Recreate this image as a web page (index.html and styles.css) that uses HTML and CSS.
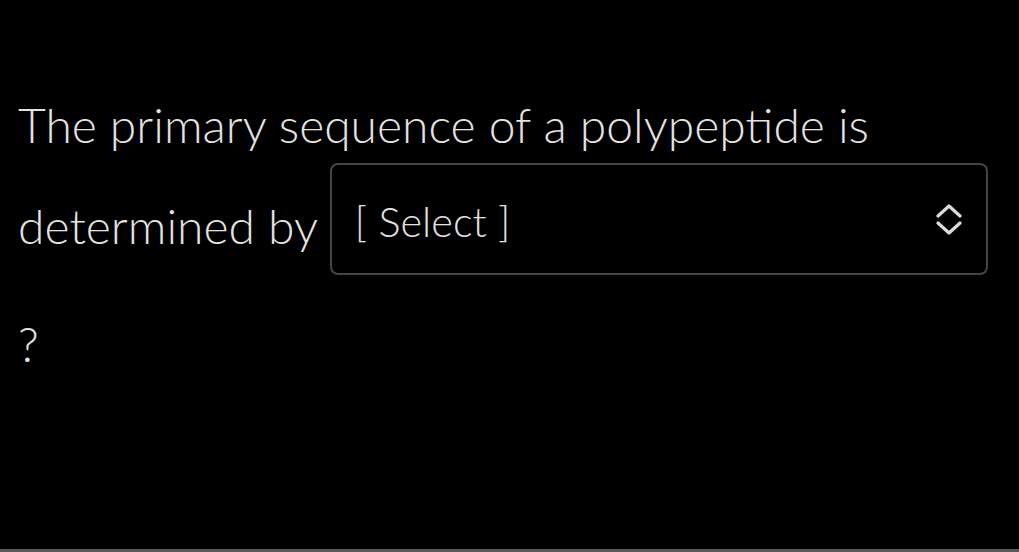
FILE: index.html
```html
<!DOCTYPE html>
<html lang="en">
<head>
<meta charset="utf-8">
<title>Quiz question</title>
<link rel="stylesheet" href="styles.css">
</head>
<body>
<main class="page">
  <p class="question">The primary sequence of a polypeptide is determined by <span class="select"><span class="select-label">[ Select ]</span><svg class="chevrons" width="26" height="31" viewBox="0 0 26 31" aria-hidden="true"><path d="M2 12 L13 2 L24 12 M2 19 L13 29 L24 19" fill="none" stroke="#dcdcdc" stroke-width="3.2" stroke-linecap="round" stroke-linejoin="round"/></svg></span> ?</p>
</main>
<footer class="bottom-rule"></footer>
</body>
</html>
```
FILE: styles.css
```css
html, body {
  margin: 0;
  padding: 0;
  background: #000;
}

body {
  height: 552px;
  display: flex;
  flex-direction: column;
  overflow: hidden;
}

.page {
  flex: 1;
  padding: 0 18px;
}

.question {
  margin: 90px 0 0;
  font-family: Lato, "Open Sans", sans-serif;
  font-weight: 300;
  font-size: 48px;
  line-height: 69px;
  color: #e2e2e2;
}

.select {
  display: inline-flex;
  align-items: center;
  justify-content: space-between;
  box-sizing: border-box;
  width: 658px;
  height: 112px;
  margin: 4px 0 34px 0;
  padding: 0 24px 0 23px;
  border: 2.5px solid #454545;
  border-radius: 8px;
  vertical-align: 7px;
  font-size: 41.5px;
  line-height: 1;
}

.select-label {
  padding-top: 6px;
  color: #e2e2e2;
}

.chevrons {
  display: block;
}

.bottom-rule {
  height: 3px;
  background: #5a5a5a;
}
```
